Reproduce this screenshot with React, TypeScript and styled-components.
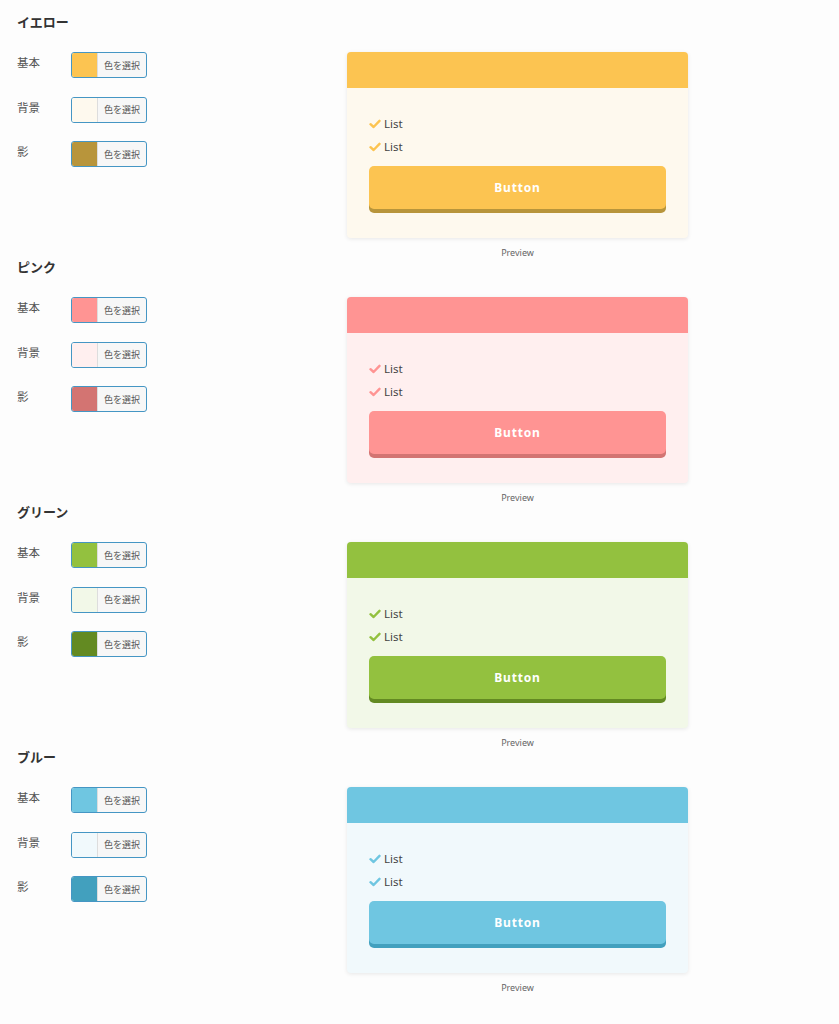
import styled, { createGlobalStyle } from 'styled-components';

const GlobalStyle = createGlobalStyle`
  html, body {
    margin: 0;
    padding: 0;
    background: #fdfdfd;
    font-family: "Noto Sans", "Noto Sans CJK JP", sans-serif;
    color: #333;
  }
`;

type Theme = {
  name: string;
  base: string;
  bg: string;
  shadow: string;
};

const THEMES: Theme[] = [
  { name: 'イエロー', base: '#fcc451', bg: '#fef9ee', shadow: '#b8953b' },
  { name: 'ピンク', base: '#ff9493', bg: '#ffefef', shadow: '#d37472' },
  { name: 'グリーン', base: '#93c13f', bg: '#f2f8e8', shadow: '#638a22' },
  { name: 'ブルー', base: '#6fc6e1', bg: '#f1f9fc', shadow: '#42a0be' },
];

const Page = styled.div`
  padding: 12px 0 0 17px;
  width: 839px;
  min-height: 1024px;
  box-sizing: border-box;
`;

const Section = styled.section`
  display: flex;
  flex-direction: column;
`;

const Title = styled.h2`
  margin: 0 0 20px;
  font-size: 13px;
  line-height: 20px;
  font-weight: 700;
  color: #333;
`;

const Body = styled.div`
  display: flex;
  align-items: flex-start;
`;

const Settings = styled.div`
  display: flex;
  flex-direction: column;
  gap: 18.5px;
  width: 330px;
`;

const SettingRow = styled.div`
  display: flex;
  align-items: center;
  height: 26px;
`;

const Label = styled.span`
  width: 54px;
  font-size: 11.5px;
  color: #555;
  line-height: 1;
  margin-top: -4px;
`;

const Picker = styled.button`
  display: flex;
  align-items: stretch;
  width: 76px;
  height: 26px;
  padding: 0;
  border: 1.5px solid #4596c4;
  border-radius: 3px;
  background: #f7f7f7;
  box-sizing: border-box;
  overflow: hidden;
  font-family: inherit;
  cursor: pointer;
`;

const Swatch = styled.span<{ $color: string }>`
  width: 25px;
  background: ${(p) => p.$color};
  border-right: 1px solid #dddddd;
`;

const PickerText = styled.span`
  flex: 1;
  display: flex;
  align-items: center;
  justify-content: center;
  font-size: 9px;
  color: #555;
`;

const PreviewColumn = styled.div`
  display: flex;
  flex-direction: column;
  align-items: center;
  width: 341px;
`;

const Card = styled.div<{ $bg: string }>`
  width: 100%;
  background: ${(p) => p.$bg};
  border-radius: 4px;
  overflow: hidden;
  box-shadow: 0 1px 4px rgba(0, 0, 0, 0.09);
`;

const CardHeader = styled.div<{ $color: string }>`
  height: 36px;
  background: ${(p) => p.$color};
`;

const CardBody = styled.div`
  padding: 24px 22px 25.5px;
`;

const List = styled.ul`
  list-style: none;
  margin: 0 0 7.5px;
  padding: 0;
`;

const ListItem = styled.li`
  display: flex;
  align-items: center;
  gap: 3px;
  height: 23px;
  font-size: 11.5px;
  color: #444;
`;

const ActionButton = styled.div<{ $color: string; $shadow: string }>`
  display: flex;
  align-items: center;
  justify-content: center;
  height: 43px;
  border-radius: 5px;
  background: ${(p) => p.$color};
  box-shadow: 0 4px 0 ${(p) => p.$shadow};
  color: #fff;
  font-size: 12px;
  font-weight: 700;
  letter-spacing: 0.8px;
  margin-bottom: 4px;
`;

const PreviewLabel = styled.div`
  margin: 10px 0 -1px;
  font-size: 9px;
  line-height: 10px;
  color: #666;
`;

function Check({ color }: { color: string }) {
  return (
    <svg width="12" height="12" viewBox="0 0 12 12">
      <path d="M1.5 6.2 L4.6 9 L10.5 2.8" fill="none" stroke={color} strokeWidth="2.4" strokeLinecap="round" strokeLinejoin="round" />
    </svg>
  );
}

function ColorPicker({ color }: { color: string }) {
  return (
    <Picker>
      <Swatch $color={color} />
      <PickerText>色を選択</PickerText>
    </Picker>
  );
}

function ThemeSection({ theme }: { theme: Theme }) {
  return (
    <Section>
      <Title>{theme.name}</Title>
      <Body>
        <Settings>
          <SettingRow>
            <Label>基本</Label>
            <ColorPicker color={theme.base} />
          </SettingRow>
          <SettingRow>
            <Label>背景</Label>
            <ColorPicker color={theme.bg} />
          </SettingRow>
          <SettingRow>
            <Label>影</Label>
            <ColorPicker color={theme.shadow} />
          </SettingRow>
        </Settings>
        <PreviewColumn>
          <Card $bg={theme.bg}>
            <CardHeader $color={theme.base} />
            <CardBody>
              <List>
                <ListItem>
                  <Check color={theme.base} />
                  List
                </ListItem>
                <ListItem>
                  <Check color={theme.base} />
                  List
                </ListItem>
              </List>
              <ActionButton $color={theme.base} $shadow={theme.shadow}>
                Button
              </ActionButton>
            </CardBody>
          </Card>
          <PreviewLabel>Preview</PreviewLabel>
        </PreviewColumn>
      </Body>
    </Section>
  );
}

export default function App() {
  return (
    <>
      <GlobalStyle />
      <Page>
        {THEMES.map((t) => (
          <ThemeSection key={t.name} theme={t} />
        ))}
      </Page>
    </>
  );
}
